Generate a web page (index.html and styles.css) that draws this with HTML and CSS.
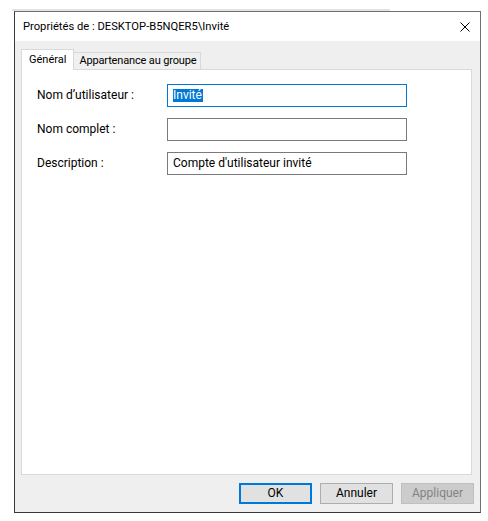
FILE: index.html
```html
<!DOCTYPE html>
<html lang="fr">
<head>
<meta charset="utf-8">
<title>Propriétés de : DESKTOP-B5NQER5\Invité</title>
<link rel="stylesheet" href="styles.css">
</head>
<body>
<div class="strip"></div>
<div class="dialog">
  <div class="titlebar">
    <span class="title">Propriétés de : DESKTOP-B5NQER5\Invité</span>
    <span class="close"><svg width="10" height="10" viewBox="0 0 10 10"><path d="M0.5 0.5 L9.5 9.5 M9.5 0.5 L0.5 9.5" stroke="#000" stroke-width="1" fill="none"/></svg></span>
  </div>
  <div class="body">
    <div class="tabs">
      <div class="tab active">Général</div>
      <div class="tab">Appartenance au groupe</div>
    </div>
    <div class="panel">
      <div class="row">
        <span class="label">Nom d’utilisateur :</span>
        <div class="input focused"><span class="sel">Invité</span></div>
      </div>
      <div class="row">
        <span class="label">Nom complet :</span>
        <div class="input"></div>
      </div>
      <div class="row">
        <span class="label">Description :</span>
        <div class="input">Compte d'utilisateur invité</div>
      </div>
    </div>
    <div class="buttons">
      <div class="btn default">OK</div>
      <div class="btn">Annuler</div>
      <div class="btn disabled">Appliquer</div>
    </div>
  </div>
</div>
</body>
</html>
```
FILE: styles.css
```css
html, body {
  margin: 0;
  padding: 0;
  background: #ffffff;
}
body {
  font-family: Roboto, "Noto Sans", "Liberation Sans", sans-serif;
  font-size: 12px;
  color: #000;
  width: 488px;
  height: 521px;
  overflow: hidden;
}
.strip {
  margin: 9px 0 0 12px;
  width: 378px;
  height: 2px;
  background: #e3e3e3;
}
.dialog {
  margin-left: 14px;
  width: 467px;
  height: 502px;
  box-sizing: border-box;
  border: 1px solid #6f6f6f;
  border-left-color: #3a3a3a;
  border-bottom-color: #3a3a3a;
  background: #efefef;
  display: flex;
  flex-direction: column;
}
.titlebar {
  height: 29px;
  background: #ffffff;
  display: flex;
  align-items: center;
  justify-content: space-between;
  padding: 0 10px 0 8px;
}
.title {
  font-size: 11.2px;
  line-height: 16px;
  padding-top: 1px;
}
.close {
  display: flex;
  width: 10px;
  height: 10px;
  margin-top: 1px;
}
.body {
  padding: 8px 0 0 6px;
  display: flex;
  flex-direction: column;
}
.tabs {
  display: flex;
  align-items: flex-end;
  height: 20px;
  position: relative;
  z-index: 1;
}
.tab {
  height: 17px;
  box-sizing: border-box;
  border: 1px solid #d9d9d9;
  border-bottom: none;
  border-left: none;
  background: #f0f0f0;
  padding: 0 4px 0 5px;
  line-height: 16px;
  font-size: 11px;
  letter-spacing: -0.15px;
}
.tab.active {
  height: 21px;
  margin-bottom: -1px;
  background: #ffffff;
  border-left: 1px solid #d9d9d9;
  padding: 2px 7px 0 7px;
  letter-spacing: 0;
}
.panel {
  width: 451px;
  height: 406px;
  box-sizing: border-box;
  border: 1px solid #d9d9d9;
  background: #ffffff;
  padding: 14px 0 0 15px;
  display: flex;
  flex-direction: column;
  gap: 11px;
}
.row {
  display: flex;
  align-items: center;
  height: 23px;
}
.label {
  width: 130px;
  line-height: 16px;
  margin-top: -2px;
}
.input {
  width: 240px;
  height: 23px;
  box-sizing: border-box;
  border: 1px solid #7a7a7a;
  background: #fff;
  padding: 0 5px;
  line-height: 20px;
}
.input.focused {
  border-color: #0078d7;
}
.sel {
  background: #0078d7;
  color: #fff;
  display: inline-block;
  line-height: 13px;
  padding: 0 1px 0 0;
  vertical-align: middle;
}
.buttons {
  display: flex;
  justify-content: flex-end;
  gap: 8px;
  margin-top: 8px;
  padding-right: 6px;
}
.btn {
  width: 73px;
  height: 21px;
  box-sizing: border-box;
  border: 1px solid #adadad;
  background: #e1e1e1;
  text-align: center;
  line-height: 18px;
  font-size: 12px;
}
.btn.default {
  border: 2px solid #0078d7;
  line-height: 16px;
}
.btn.disabled {
  border-color: #bfbfbf;
  background: #cccccc;
  color: #838383;
}
```
